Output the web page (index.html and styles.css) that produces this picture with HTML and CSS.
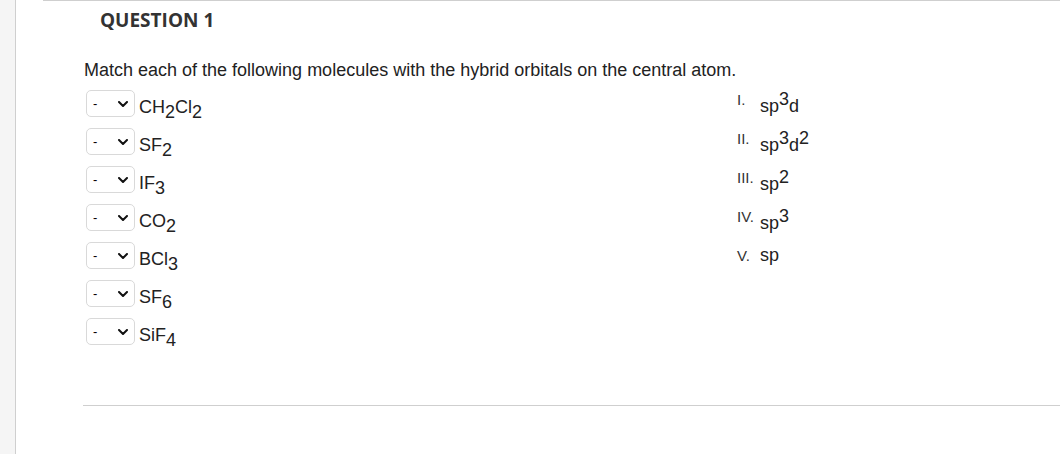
FILE: index.html
```html
<!DOCTYPE html>
<html lang="en">
<head>
<meta charset="utf-8">
<title>Question 1</title>
<link rel="stylesheet" href="styles.css">
</head>
<body>
<div class="page">
  <aside class="rail"></aside>
  <main class="main">
    <section class="question">
      <h2 class="q-title">QUESTION 1</h2>
      <div class="q-body">
        <p class="prompt">Match each of the following molecules with the hybrid orbitals on the central atom.</p>
        <div class="match">
          <ul class="items">
            <li class="item"><span class="sel"><select><option>-</option></select><svg class="chev" viewBox="0 0 10 6" width="10" height="6"><path d="M1 1 L5 5 L9 1" /></svg></span><span class="mol">CH<sub>2</sub>Cl<sub>2</sub></span></li>
            <li class="item"><span class="sel"><select><option>-</option></select><svg class="chev" viewBox="0 0 10 6" width="10" height="6"><path d="M1 1 L5 5 L9 1" /></svg></span><span class="mol">SF<sub>2</sub></span></li>
            <li class="item"><span class="sel"><select><option>-</option></select><svg class="chev" viewBox="0 0 10 6" width="10" height="6"><path d="M1 1 L5 5 L9 1" /></svg></span><span class="mol">IF<sub>3</sub></span></li>
            <li class="item"><span class="sel"><select><option>-</option></select><svg class="chev" viewBox="0 0 10 6" width="10" height="6"><path d="M1 1 L5 5 L9 1" /></svg></span><span class="mol">CO<sub>2</sub></span></li>
            <li class="item"><span class="sel"><select><option>-</option></select><svg class="chev" viewBox="0 0 10 6" width="10" height="6"><path d="M1 1 L5 5 L9 1" /></svg></span><span class="mol">BCl<sub>3</sub></span></li>
            <li class="item"><span class="sel"><select><option>-</option></select><svg class="chev" viewBox="0 0 10 6" width="10" height="6"><path d="M1 1 L5 5 L9 1" /></svg></span><span class="mol">SF<sub>6</sub></span></li>
            <li class="item"><span class="sel"><select><option>-</option></select><svg class="chev" viewBox="0 0 10 6" width="10" height="6"><path d="M1 1 L5 5 L9 1" /></svg></span><span class="mol">SiF<sub>4</sub></span></li>
          </ul>
          <ol class="answers">
            <li class="answer"><span class="num"><span>I.</span></span><span class="ans">sp<sup>3</sup>d</span></li>
            <li class="answer"><span class="num"><span>II.</span></span><span class="ans">sp<sup>3</sup>d<sup>2</sup></span></li>
            <li class="answer"><span class="num"><span>III.</span></span><span class="ans">sp<sup>2</sup></span></li>
            <li class="answer"><span class="num"><span>IV.</span></span><span class="ans">sp<sup>3</sup></span></li>
            <li class="answer"><span class="num"><span>V.</span></span><span class="ans">sp</span></li>
          </ol>
        </div>
      </div>
    </section>
  </main>
</div>
</body>
</html>
```

FILE: styles.css
```css
* { box-sizing: border-box; }

html, body {
  margin: 0;
  padding: 0;
  background: #fff;
}

body {
  font-family: "Liberation Sans", Arial, sans-serif;
  color: #222;
}

.page {
  display: flex;
  min-height: 454px;
}

.rail {
  width: 16px;
  flex: 0 0 16px;
  background: #f5f5f5;
  border-right: 1px solid #cfcfcf;
}

.main {
  flex: 1;
  padding-left: 27px;
}

.question {
  border-top: 1px solid #cfcfcf;
}

.q-title {
  margin: 0;
  padding: 6px 0 0 57px;
  font-family: "Open Sans", sans-serif;
  font-weight: 700;
  font-size: 19px;
  line-height: 26px;
  color: #333;
}

.q-body {
  margin-left: 40px;
  padding-bottom: 60px;
  border-bottom: 1px solid #cfcfcf;
}

.prompt {
  margin: 27px 0 0 1px;
  font-size: 18px;
  line-height: 21px;
  color: #222;
}

.match {
  display: flex;
  align-items: flex-start;
  margin-top: 9px;
}

.items {
  list-style: none;
  margin: 0;
  padding: 0 0 0 3px;
  width: 654px;
  display: flex;
  flex-direction: column;
  gap: 11px;
}

.item {
  display: flex;
  align-items: flex-start;
  height: 27px;
}

.sel {
  position: relative;
  display: block;
  width: 49px;
  height: 27px;
}

.sel select {
  appearance: none;
  -webkit-appearance: none;
  width: 49px;
  height: 27px;
  margin: 0;
  padding: 0 0 0 6px;
  border: 1px solid #d9d9d9;
  border-radius: 5px;
  background: #fff;
  font-family: "Liberation Sans", Arial, sans-serif;
  font-size: 13px;
  color: #000;
}

.chev {
  position: absolute;
  left: 32px;
  top: 11px;
  fill: none;
  stroke: #111;
  stroke-width: 2;
  stroke-linecap: round;
  stroke-linejoin: round;
  pointer-events: none;
}

.mol {
  margin: 7px 0 0 4px;
  font-size: 18px;
  line-height: 21px;
  color: #222;
}

.mol sub {
  font-size: 100%;
  vertical-align: sub;
  line-height: 0;
}

.answers {
  list-style: none;
  margin: -1px 0 0 0;
  padding: 0;
  display: flex;
  flex-direction: column;
  gap: 11px;
}

.answer {
  display: flex;
  align-items: flex-start;
}

.num {
  width: 23px;
  font-size: 18px;
  line-height: 21px;
}

.num span {
  font-size: 15px;
  color: #333;
}

.ans {
  font-size: 18px;
  line-height: 21px;
  color: #222;
}

.ans sup {
  font-size: 100%;
  vertical-align: super;
}
```
